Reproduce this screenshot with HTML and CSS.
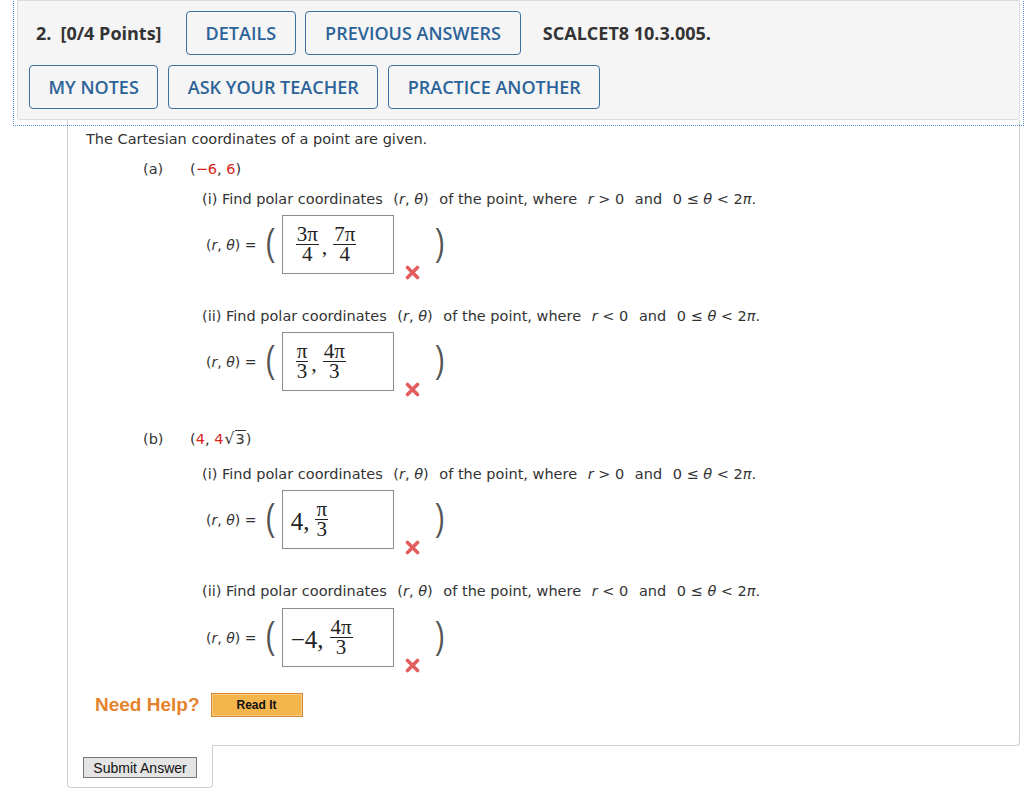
FILE: index.html
```html
<!DOCTYPE html>
<html>
<head>
<meta charset="utf-8">
<link rel="stylesheet" href="styles.css">
</head>
<body>
<div class="qhead-wrap">
  <div class="qhead">
    <div class="hrow r1">
      <span class="qnum">2.<span class="pts">[0/4 Points]</span></span>
      <button class="hbtn">DETAILS</button>
      <button class="hbtn">PREVIOUS ANSWERS</button>
      <span class="qid">SCALCET8 10.3.005.</span>
    </div>
    <div class="hrow r2">
      <button class="hbtn">MY NOTES</button>
      <button class="hbtn">ASK YOUR TEACHER</button>
      <button class="hbtn">PRACTICE ANOTHER</button>
    </div>
  </div>
</div>

<div class="qbody">
  <div class="line intro">The Cartesian coordinates of a point are given.</div>

  <div class="line part"><span class="plabel">(a)</span><span>(<span class="red">−6</span>, <span class="red">6</span>)</span></div>

  <div class="line sub sub-first">(i) Find polar coordinates <span class="m">(<i>r</i>, <i>θ</i>)</span> of the point, where <span class="m"><i>r</i> &gt; 0</span> and <span class="m">0 ≤ <i>θ</i> &lt; 2<i>π</i>.</span></div>
  <div class="ans">
    <span class="alabel">(<i>r</i>, <i>θ</i>) =</span>
    <span class="paren lp">(</span>
    <span class="abox">
      <span class="frac f1"><span class="num">3π</span><span class="den">4</span></span><span class="comma c1">,</span><span class="frac"><span class="num">7π</span><span class="den">4</span></span>
    </span>
    <svg class="xmark" width="15" height="15" viewBox="0 0 15 15"><path d="M2.5 2.5 L12.5 12.5 M12.5 2.5 L2.5 12.5" stroke="#e35f5f" stroke-width="3.6" stroke-linecap="round"/></svg>
    <span class="paren rp">)</span>
  </div>

  <div class="line sub sub-after">(ii) Find polar coordinates <span class="m">(<i>r</i>, <i>θ</i>)</span> of the point, where <span class="m"><i>r</i> &lt; 0</span> and <span class="m">0 ≤ <i>θ</i> &lt; 2<i>π</i>.</span></div>
  <div class="ans">
    <span class="alabel">(<i>r</i>, <i>θ</i>) =</span>
    <span class="paren lp">(</span>
    <span class="abox">
      <span class="frac f1"><span class="num">π</span><span class="den">3</span></span><span class="comma c1">,</span><span class="frac"><span class="num">4π</span><span class="den">3</span></span>
    </span>
    <svg class="xmark" width="15" height="15" viewBox="0 0 15 15"><path d="M2.5 2.5 L12.5 12.5 M12.5 2.5 L2.5 12.5" stroke="#e35f5f" stroke-width="3.6" stroke-linecap="round"/></svg>
    <span class="paren rp">)</span>
  </div>

  <div class="line part part-b"><span class="plabel">(b)</span><span>(<span class="red">4</span>, <span class="red">4</span><span class="sqrt"><span class="rad">√</span><span class="radicand">3</span></span>)</span></div>

  <div class="line sub sub-b">(i) Find polar coordinates <span class="m">(<i>r</i>, <i>θ</i>)</span> of the point, where <span class="m"><i>r</i> &gt; 0</span> and <span class="m">0 ≤ <i>θ</i> &lt; 2<i>π</i>.</span></div>
  <div class="ans">
    <span class="alabel">(<i>r</i>, <i>θ</i>) =</span>
    <span class="paren lp">(</span>
    <span class="abox">
      <span class="big">4,</span><span class="frac f2"><span class="num">π</span><span class="den">3</span></span>
    </span>
    <svg class="xmark" width="15" height="15" viewBox="0 0 15 15"><path d="M2.5 2.5 L12.5 12.5 M12.5 2.5 L2.5 12.5" stroke="#e35f5f" stroke-width="3.6" stroke-linecap="round"/></svg>
    <span class="paren rp">)</span>
  </div>

  <div class="line sub sub-after">(ii) Find polar coordinates <span class="m">(<i>r</i>, <i>θ</i>)</span> of the point, where <span class="m"><i>r</i> &lt; 0</span> and <span class="m">0 ≤ <i>θ</i> &lt; 2<i>π</i>.</span></div>
  <div class="ans ans-last">
    <span class="alabel">(<i>r</i>, <i>θ</i>) =</span>
    <span class="paren lp">(</span>
    <span class="abox">
      <span class="big">−4,</span><span class="frac f2"><span class="num">4π</span><span class="den">3</span></span>
    </span>
    <svg class="xmark" width="15" height="15" viewBox="0 0 15 15"><path d="M2.5 2.5 L12.5 12.5 M12.5 2.5 L2.5 12.5" stroke="#e35f5f" stroke-width="3.6" stroke-linecap="round"/></svg>
    <span class="paren rp">)</span>
  </div>

  <div class="help">
    <span class="needhelp">Need Help?</span>
    <button class="readit">Read It</button>
  </div>
</div>

<div class="submit-tab">
  <button class="submit">Submit Answer</button>
</div>
</body>
</html>
```

FILE: styles.css
```css
html, body {
  margin: 0;
  padding: 0;
  background: #fff;
}

body {
  font-family: "DejaVu Sans", Verdana, sans-serif;
  font-size: 14.5px;
  color: #333;
}

/* ---------- header ---------- */
.qhead-wrap {
  position: relative;
  z-index: 1;
  box-sizing: border-box;
  width: 1009px;
  margin-left: 14px;
  margin-bottom: -5px;
  padding: 0 3px 5px 3px;
  outline: 1px dotted #5b8fdc;
}

.qhead {
  background: #f5f5f5;
  border: 1px solid #dcdcdc;
  border-radius: 0 0 3px 3px;
  padding: 10px 0;
  font-family: "Open Sans", "Liberation Sans", sans-serif;
}

.hrow {
  display: flex;
  align-items: center;
}

.r1 {
  padding-left: 18px;
}

.r2 {
  padding-left: 11px;
  margin-top: 10px;
}

.qnum {
  font-weight: 700;
  font-size: 18px;
  color: #333;
  margin-right: 24px;
}

.pts {
  margin-left: 9px;
}

.qid {
  font-weight: 700;
  font-size: 18px;
  color: #333;
  margin-left: 13px;
}

.hbtn {
  box-sizing: border-box;
  height: 44px;
  padding: 0 19px;
  margin-right: 9px;
  border: 1px solid #3d6f9f;
  border-radius: 4px;
  background: transparent;
  color: #2c6398;
  font-family: "Open Sans", "Liberation Sans", sans-serif;
  font-weight: 600;
  font-size: 18px;
  line-height: 24px;
}

.r2 .hbtn {
  margin-right: 10px;
  padding: 0 18.5px;
}

/* ---------- body ---------- */
.qbody {
  box-sizing: border-box;
  width: 953px;
  margin-left: 67px;
  border: 1px solid #d0d0d0;
  border-top: none;
  border-radius: 0 0 4px 0;
  padding: 9px 0 28px 18px;
}

.line {
  line-height: 20px;
  white-space: nowrap;
}

.part {
  margin-top: 10px;
  padding-left: 57px;
  display: flex;
}

.part-b {
  margin-top: 38px;
}

.plabel {
  display: inline-block;
  width: 47px;
}

.red {
  color: #d5261c;
}

.sqrt {
  margin-left: 1px;
}

.rad {
  font-size: 16px;
}

.radicand {
  border-top: 1px solid #333;
  padding: 0 1px;
}

.sub {
  padding-left: 116px;
}

.sub-first {
  margin-top: 10px;
}

.sub-after {
  margin-top: 32px;
}

.sub-b {
  margin-top: 15px;
}

.m {
  margin: 0 6px;
}

.ans {
  display: flex;
  align-items: center;
  height: 59px;
  margin-top: 6px;
  padding-left: 120px;
}

.ans-last {
  margin-top: 7px;
}

.alabel {
  font-size: 14px;
  white-space: nowrap;
}

.paren {
  font-family: "Liberation Sans", sans-serif;
  font-size: 37px;
  line-height: 40px;
  color: #555;
  transform: scaleX(0.75);
}

.lp {
  margin: 0 5px 3px 8px;
}

.rp {
  margin: 0 0 3px 14px;
}

.abox {
  box-sizing: border-box;
  width: 112px;
  height: 59px;
  border: 1px solid #8c8c8c;
  background: #fff;
  display: flex;
  align-items: center;
  padding-left: 8px;
  font-family: "Liberation Serif", "Times New Roman", serif;
  color: #222;
}

.frac {
  display: inline-flex;
  flex-direction: column;
  align-items: center;
  font-size: 21px;
  line-height: 17px;
}

.frac .num {
  padding: 0 1px 1px;
  border-bottom: 1px solid #222;
}

.frac .den {
  padding-top: 1px;
}

.f1 {
  margin-left: 5px;
}

.f2 {
  margin-left: 6px;
}

.comma {
  font-size: 22px;
  line-height: 22px;
  margin: 4px 6px 0 3px;
}

.big {
  font-size: 25px;
  line-height: 30px;
  margin-top: 4px;
}

.xmark {
  align-self: flex-end;
  margin: 0 0 -6px 11px;
}

/* ---------- help ---------- */
.help {
  display: flex;
  align-items: center;
  margin-top: 26px;
  padding-left: 9px;
  height: 24px;
}

.needhelp {
  font-family: "Liberation Sans", Arial, sans-serif;
  font-weight: 700;
  font-size: 19px;
  color: #e5832d;
}

.readit {
  box-sizing: border-box;
  width: 92px;
  height: 24px;
  margin-left: 11px;
  padding: 0;
  border: 1px solid #d68630;
  box-shadow: inset 0 0 0 1px #f8cf82;
  background: #f4b54d;
  font-family: "Liberation Sans", Arial, sans-serif;
  font-weight: 700;
  font-size: 12px;
  color: #111;
}

/* ---------- submit tab ---------- */
.submit-tab {
  position: relative;
  box-sizing: border-box;
  width: 146px;
  margin-top: -1px;
  margin-left: 67px;
  border: 1px solid #d0d0d0;
  border-top: none;
  border-radius: 0 0 4px 4px;
  background: #fff;
  padding: 12px 0 9px 15px;
}

.submit {
  box-sizing: border-box;
  width: 114px;
  height: 21px;
  padding: 0;
  border: 1px solid #777;
  background: #e4e4e4;
  font-family: "Liberation Sans", Arial, sans-serif;
  font-size: 14px;
  color: #111;
  display: block;
}
```
